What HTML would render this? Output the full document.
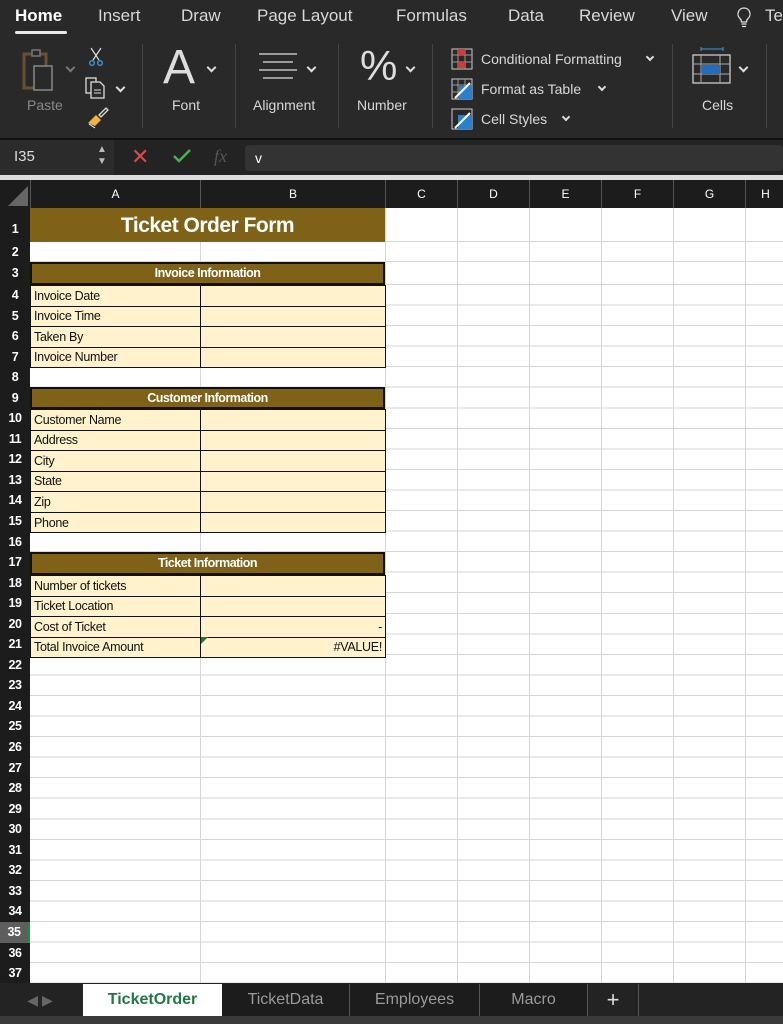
<!DOCTYPE html>
<html><head><style>
*{margin:0;padding:0;box-sizing:border-box}
body{width:783px;height:1024px;overflow:hidden;background:#fff;font-family:"Liberation Sans",sans-serif;position:relative}
.a{position:absolute}
.top{left:0;top:0;width:783px;height:138px;background:#292929}
.tab{top:6px;font-size:17px;color:#d8d8d8}
.rl{font-size:14px;color:#d8d8d8}
.vsep{width:1px;background:#444;top:44px;height:84px}
.chev{width:7px;height:7px;border-right:2px solid #ddd;border-bottom:2px solid #ddd;transform:rotate(45deg)}
.colh{top:180px;height:28px;background:#1c1c1c;width:783px;left:0}
.ch{top:180px;height:28px;line-height:28px;text-align:center;color:#fff;font-size:12px;border-left:1px solid #555}
.vl{top:208px;height:775px;width:1px;background:#d6d6d6}
.rn{left:0;width:30px;background:#1c1c1c;color:#fff;font-family:"Liberation Sans Narrow","Liberation Sans",sans-serif;font-weight:bold;font-size:12.5px;text-align:center;letter-spacing:-.5px}
.frm{border-collapse:collapse;font-family:"Liberation Sans Narrow","Liberation Sans",sans-serif;font-size:12.5px;letter-spacing:-.3px;color:#111}
.frm td{border:1.5px solid #111;background:#fff2cc;height:20.55px;padding:0 3px;line-height:18px}
.hdr{background:#7f6118;border:2.5px solid #111;color:#fff;font-weight:bold;font-size:12.5px;text-align:center;font-family:"Liberation Sans Narrow","Liberation Sans",sans-serif;letter-spacing:-.5px}
.st{top:984px;height:32px;font-size:16px;color:#9a9a9a;text-align:center;line-height:32px}
</style></head><body>
<div class="a top"></div>
<div class="a tab" style="left:15px;font-weight:bold;color:#fff">Home</div>
<div class="a" style="left:15px;top:31px;width:52px;height:3px;background:#e8e8e8;border-radius:2px"></div>
<div class="a tab" style="left:98px">Insert</div>
<div class="a tab" style="left:181px">Draw</div>
<div class="a tab" style="left:257px">Page Layout</div>
<div class="a tab" style="left:396px">Formulas</div>
<div class="a tab" style="left:508px">Data</div>
<div class="a tab" style="left:579px">Review</div>
<div class="a tab" style="left:671px">View</div>
<svg class="a" style="left:735px;top:6px" width="18" height="22"><path d="M9 2a6 6 0 0 0-4 10.5c1 1 1.5 2 1.5 3.5h5c0-1.5.5-2.5 1.5-3.5A6 6 0 0 0 9 2zM6.5 18h5M7 20.5h4" fill="none" stroke="#ddd" stroke-width="1.3"/></svg>
<div class="a tab" style="left:765px">Te</div>
<svg class="a" style="left:22px;top:48px" width="40" height="44"><rect x="2" y="6" width="22" height="34" fill="none" stroke="#6b5030" stroke-width="3"/><rect x="10" y="2" width="8" height="6" fill="#292929" stroke="#777" stroke-width="1.5"/><rect x="12" y="18" width="18" height="24" fill="#292929" stroke="#888" stroke-width="1.5"/></svg>
<div class="a chev" style="left:67px;top:64px;border-color:#777"></div>
<div class="a rl" style="left:27px;top:97px;color:#8a8a8a">Paste</div>
<svg class="a" style="left:88px;top:46px" width="16" height="22"><path d="M3 2l8 12M13 2L5 14" stroke="#ddd" stroke-width="1.2"/><circle cx="4" cy="17" r="2.3" fill="none" stroke="#3a9ae0" stroke-width="1.4"/><circle cx="12" cy="17" r="2.3" fill="none" stroke="#3a9ae0" stroke-width="1.4"/></svg>
<svg class="a" style="left:85px;top:77px" width="24" height="22"><rect x="1" y="1" width="10" height="15" fill="none" stroke="#ddd" stroke-width="1.3"/><path d="M6 5h9l4 4v12H6z" fill="#292929" stroke="#ddd" stroke-width="1.3"/><path d="M9 13h7M9 16h7" stroke="#ddd"/></svg>
<div class="a chev" style="left:117px;top:84px"></div>
<svg class="a" style="left:86px;top:107px" width="24" height="22"><path d="M13 8l7-7 2 2-7 7z" fill="none" stroke="#ddd" stroke-width="1.3"/><path d="M2 16l8-8 5 5-6 6z" fill="#f2b43a"/><path d="M3 17l6 4" stroke="#fff" stroke-width="1"/></svg>
<div class="a vsep" style="left:142px"></div>
<div class="a" style="left:163px;top:40px;font-size:48px;color:#ddd;font-weight:300">A</div>
<div class="a chev" style="left:208px;top:64px"></div>
<div class="a rl" style="left:172px;top:97px">Font</div>
<div class="a vsep" style="left:235px"></div>
<svg class="a" style="left:258px;top:52px" width="42" height="32"><path d="M1 2h38M5 10h30M1 18h38M5 26h30" stroke="#ddd" stroke-width="1.3"/></svg>
<div class="a chev" style="left:308px;top:64px"></div>
<div class="a rl" style="left:253px;top:97px">Alignment</div>
<div class="a vsep" style="left:338px"></div>
<div class="a" style="left:360px;top:42px;font-size:42px;color:#ddd;font-weight:300">%</div>
<div class="a chev" style="left:407px;top:64px"></div>
<div class="a rl" style="left:357px;top:97px">Number</div>
<div class="a vsep" style="left:432px"></div>
<svg class="a" style="left:451px;top:48px" width="22" height="22"><rect x="1" y="1" width="20" height="20" fill="none" stroke="#ccc"/><path d="M1 7h20M1 14h20M7 1v20M14 1v20" stroke="#999"/><rect x="7" y="1" width="7" height="6" fill="#d03a3a"/><rect x="7" y="14" width="7" height="6" fill="#d03a3a"/></svg>
<div class="a rl" style="left:481px;top:51px">Conditional Formatting</div>
<div class="a chev" style="left:647px;top:54px;width:6px;height:6px"></div>
<svg class="a" style="left:451px;top:78px" width="22" height="22"><rect x="1" y="1" width="20" height="20" fill="none" stroke="#ccc"/><path d="M1 7h20M1 14h20M7 1v20M14 1v20" stroke="#999"/><rect x="8" y="8" width="13" height="13" fill="#2b7fd0"/><path d="M4 20L19 5" stroke="#fff" stroke-width="2"/></svg>
<div class="a rl" style="left:481px;top:81px">Format as Table</div>
<div class="a chev" style="left:599px;top:84px;width:6px;height:6px"></div>
<svg class="a" style="left:451px;top:108px" width="22" height="22"><rect x="1" y="1" width="20" height="20" fill="none" stroke="#ccc"/><rect x="7" y="7" width="14" height="14" fill="#2b7fd0"/><path d="M4 20L19 5" stroke="#fff" stroke-width="2"/></svg>
<div class="a rl" style="left:481px;top:111px">Cell Styles</div>
<div class="a chev" style="left:563px;top:114px;width:6px;height:6px"></div>
<div class="a vsep" style="left:672px"></div>
<svg class="a" style="left:691px;top:46px" width="40" height="40"><path d="M10 3h22M10 1v4M32 1v4" stroke="#3a9ae0"/><rect x="2" y="9" width="37" height="28" fill="none" stroke="#ccc" stroke-width="1.3"/><path d="M2 18h37M2 28h37M10 9v28M29 9v28" stroke="#aaa"/><rect x="11" y="19" width="18" height="9" fill="#1e6fc0"/></svg>
<div class="a chev" style="left:740px;top:64px"></div>
<div class="a rl" style="left:702px;top:97px">Cells</div>
<div class="a vsep" style="left:766px"></div>
<div class="a" style="left:0;top:138px;width:783px;height:42px;background:#232323;border-top:2px solid #111"></div>
<div class="a" style="left:0;top:140px;width:114px;height:36px;background:#2b2b2b"></div>
<div class="a" style="left:14px;top:148px;font-size:15px;color:#ddd">I35</div>
<div class="a" style="left:97px;top:144px;font-size:10px;color:#bbb;line-height:12px">▲<br>▼</div>
<div class="a" style="left:131px;top:144px;font-size:22px;color:#e04848">✕</div>
<svg class="a" style="left:172px;top:148px" width="20" height="16"><path d="M2 8l5 5L18 2" fill="none" stroke="#4caf50" stroke-width="2.5"/></svg>
<div class="a" style="left:214px;top:146px;font-size:18px;color:#555;font-style:italic;font-family:'Liberation Serif',serif">fx</div>
<div class="a" style="left:245px;top:145px;width:538px;height:26px;background:#333;border-radius:4px"></div>
<div class="a" style="left:255px;top:150px;font-size:14px;color:#fff">v</div>
<div class="a" style="left:0;top:175px;width:783px;height:5px;background:#ddd"></div>
<div class="a colh"></div>
<svg class="a" style="left:0;top:180px" width="30" height="28"><path d="M8 26L28 6v20z" fill="#666"/></svg>
<div class="a ch" style="left:30px;width:170px">A</div>
<div class="a ch" style="left:200px;width:185px">B</div>
<div class="a ch" style="left:385px;width:72px">C</div>
<div class="a ch" style="left:457px;width:72px">D</div>
<div class="a ch" style="left:529px;width:72px">E</div>
<div class="a ch" style="left:601px;width:72px">F</div>
<div class="a ch" style="left:673px;width:72px">G</div>
<div class="a ch" style="left:745px;width:40px">H</div>
<div class="a" style="left:30px;top:285px;width:753px;height:698px;background:repeating-linear-gradient(to bottom,transparent 0,transparent 19.55px,#d6d6d6 19.55px,#d6d6d6 20.55px)"></div>
<div class="a" style="left:30px;top:241px;width:753px;height:1px;background:#d6d6d6"></div>
<div class="a" style="left:30px;top:261px;width:753px;height:1px;background:#d6d6d6"></div>
<div class="a" style="left:30px;top:284px;width:753px;height:1px;background:#d6d6d6"></div>
<div class="a vl" style="left:200px"></div>
<div class="a vl" style="left:385px"></div>
<div class="a vl" style="left:457px"></div>
<div class="a vl" style="left:529px"></div>
<div class="a vl" style="left:601px"></div>
<div class="a vl" style="left:673px"></div>
<div class="a vl" style="left:745px"></div>
<div class="a rn" style="top:208px">
<div style="height:34px;line-height:42px">1</div><div style="height:20px;line-height:20px">2</div><div style="height:23px;line-height:23px">3</div>
</div>
<div class="a rn" style="top:285px;line-height:20px">
<div style="height:20.55px">4</div><div style="height:20.55px">5</div><div style="height:20.55px">6</div><div style="height:20.55px">7</div><div style="height:20.55px">8</div><div style="height:20.55px">9</div><div style="height:20.55px">10</div><div style="height:20.55px">11</div><div style="height:20.55px">12</div><div style="height:20.55px">13</div><div style="height:20.55px">14</div><div style="height:20.55px">15</div><div style="height:20.55px">16</div><div style="height:20.55px">17</div><div style="height:20.55px">18</div><div style="height:20.55px">19</div><div style="height:20.55px">20</div><div style="height:20.55px">21</div><div style="height:20.55px">22</div><div style="height:20.55px">23</div><div style="height:20.55px">24</div><div style="height:20.55px">25</div><div style="height:20.55px">26</div><div style="height:20.55px">27</div><div style="height:20.55px">28</div><div style="height:20.55px">29</div><div style="height:20.55px">30</div><div style="height:20.55px">31</div><div style="height:20.55px">32</div><div style="height:20.55px">33</div><div style="height:20.55px">34</div><div style="height:20.55px;background:#5e5e5e;border-right:2px solid #1d8a4a">35</div><div style="height:20.55px">36</div><div style="height:20.55px">37</div>
</div>
<div class="a" style="left:30px;top:208px;width:355px;height:34px;background:#7f6118;color:#fff;font-weight:bold;font-size:21px;letter-spacing:-.5px;text-align:center;line-height:36px;font-family:'Liberation Sans Narrow','Liberation Sans',sans-serif">Ticket Order Form</div>
<div class="a hdr" style="left:30px;top:262px;width:355px;height:23px;line-height:19px">Invoice Information</div>
<table class="a frm" style="left:30px;top:285px;width:356px">
<tr><td style="width:170px">Invoice Date</td><td></td></tr>
<tr><td>Invoice Time</td><td></td></tr>
<tr><td>Taken By</td><td></td></tr>
<tr><td>Invoice Number</td><td></td></tr>
</table>
<div class="a hdr" style="left:30px;top:387px;width:355px;height:22px;line-height:18px">Customer Information</div>
<table class="a frm" style="left:30px;top:409px;width:356px">
<tr><td style="width:170px">Customer Name</td><td></td></tr>
<tr><td>Address</td><td></td></tr>
<tr><td>City</td><td></td></tr>
<tr><td>State</td><td></td></tr>
<tr><td>Zip</td><td></td></tr>
<tr><td>Phone</td><td></td></tr>
</table>
<div class="a hdr" style="left:30px;top:552px;width:355px;height:23px;line-height:19px">Ticket Information</div>
<table class="a frm" style="left:30px;top:575px;width:356px">
<tr><td style="width:170px">Number of tickets</td><td></td></tr>
<tr><td>Ticket Location</td><td></td></tr>
<tr><td>Cost of Ticket</td><td style="text-align:right">-</td></tr>
<tr><td>Total Invoice Amount</td><td style="text-align:right">#VALUE!</td></tr>
</table>
<svg class="a" style="left:201px;top:637px" width="8" height="8"><path d="M0 0h7L0 7z" fill="#1b7a30"/></svg>
<div class="a" style="left:0;top:983px;width:783px;height:41px;background:#232323"></div>
<div class="a" style="left:0;top:1016px;width:783px;height:8px;background:#3a3a3a"></div>
<div class="a st" style="left:10px;width:60px;color:#666;font-size:14px">◀ ▶</div>
<div class="a st" style="left:83px;width:139px;background:#fff;color:#1e7a43;font-weight:bold">TicketOrder</div>
<div class="a st" style="left:222px;width:128px;background:#1c1c1c;border-right:1px solid #555">TicketData</div>
<div class="a st" style="left:350px;width:130px;background:#1c1c1c;border-right:1px solid #555">Employees</div>
<div class="a st" style="left:480px;width:108px;background:#1c1c1c;border-right:1px solid #555">Macro</div>
<div class="a st" style="left:588px;width:51px;border-right:1px solid #555;color:#ddd;font-size:22px">+</div>
</body></html>
